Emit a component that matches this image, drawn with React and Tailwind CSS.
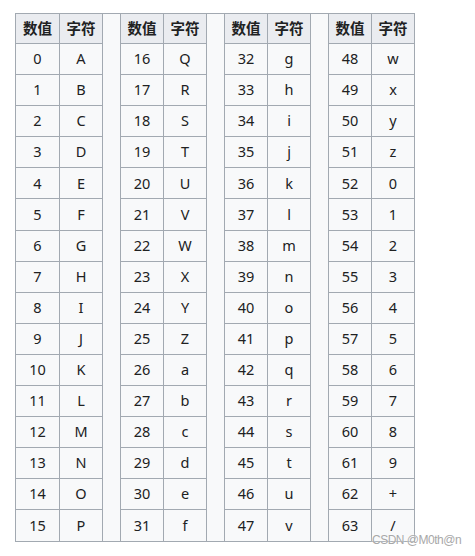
import React from "react";

const chars = "ABCDEFGHIJKLMNOPQRSTUVWXYZabcdefghijklmnopqrstuvwxyz0123456789+/";

function SubTable({ start, first }) {
  const rows = [];
  for (let i = start; i < start + 16; i++) rows.push(i);
  return (
    <div
      className={
        first
          ? "grid grid-cols-[43px_42px] grid-rows-[29px] auto-rows-[30.1px] gap-px"
          : "grid grid-cols-[42px_42px] grid-rows-[29px] auto-rows-[30.1px] gap-px"
      }
    >
      <div className="bg-[#eaecf0] font-bold flex items-center justify-center">数值</div>
      <div className="bg-[#eaecf0] font-bold flex items-center justify-center">字符</div>
      {rows.map((n) => (
        <React.Fragment key={n}>
          <div className="bg-[#f8f9fa] flex items-center justify-center">{n}</div>
          <div className="bg-[#f8f9fa] flex items-center justify-center">{chars[n]}</div>
        </React.Fragment>
      ))}
    </div>
  );
}

export default function App() {
  return (
    <div className="relative w-[475px] h-[556px] bg-white text-[14.5px] text-[#202122] font-['Noto_Sans','Noto_Sans_CJK_SC',sans-serif] pt-[13px] pl-[15px]">
      <div className="inline-flex gap-px p-px bg-[#a2a9b1]">
        <SubTable start={0} first />
        <div className="w-[17px] bg-[#f8f9fa]" />
        <SubTable start={16} />
        <div className="w-[17px] bg-[#f8f9fa]" />
        <SubTable start={32} />
        <div className="w-[17px] bg-[#f8f9fa]" />
        <SubTable start={48} />
      </div>
      <div className="absolute left-[372px] top-[533px] text-[12px] leading-[14px] tracking-[-0.5px] text-[#a8a8a8] font-['Liberation_Sans',sans-serif] [text-shadow:0_0_2px_#fff]">
        CSDN @M0th@n
      </div>
    </div>
  );
}
